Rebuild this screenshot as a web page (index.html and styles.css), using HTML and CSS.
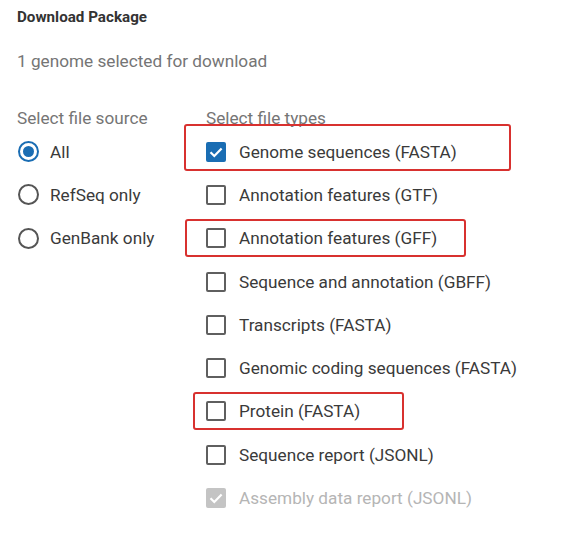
FILE: index.html
```html
<!DOCTYPE html>
<html>
<head>
<meta charset="utf-8">
<link rel="stylesheet" href="styles.css">
</head>
<body>
<div class="panel">
  <div class="title">Download Package</div>
  <div class="subtitle">1 genome selected for download</div>
  <div class="columns">
    <div class="col source">
      <div class="col-head">Select file source</div>
      <div class="row"><span class="radio checked"></span><span class="label">All</span></div>
      <div class="row"><span class="radio"></span><span class="label">RefSeq only</span></div>
      <div class="row"><span class="radio"></span><span class="label">GenBank only</span></div>
    </div>
    <div class="col types">
      <div class="col-head">Select file types</div>
      <div class="row"><span class="check checked"><svg viewBox="0 0 20 20"><path d="M4.5 10.2 L8.3 14 L15.6 6.6" fill="none" stroke="#fff" stroke-width="2.2"/></svg></span><span class="label">Genome sequences (FASTA)</span></div>
      <div class="row"><span class="check"></span><span class="label">Annotation features (GTF)</span></div>
      <div class="row"><span class="check"></span><span class="label">Annotation features (GFF)</span></div>
      <div class="row"><span class="check"></span><span class="label">Sequence and annotation (GBFF)</span></div>
      <div class="row"><span class="check"></span><span class="label">Transcripts (FASTA)</span></div>
      <div class="row"><span class="check"></span><span class="label">Genomic coding sequences (FASTA)</span></div>
      <div class="row"><span class="check"></span><span class="label">Protein (FASTA)</span></div>
      <div class="row"><span class="check"></span><span class="label">Sequence report (JSONL)</span></div>
      <div class="row disabled"><span class="check checked"><svg viewBox="0 0 20 20"><path d="M4.5 10.2 L8.3 14 L15.6 6.6" fill="none" stroke="#fff" stroke-width="2.2"/></svg></span><span class="label">Assembly data report (JSONL)</span></div>
      <div class="mark mark1"></div>
      <div class="mark mark2"></div>
      <div class="mark mark3"></div>
    </div>
  </div>
</div>
</body>
</html>
```

FILE: styles.css
```css
html, body {
  margin: 0;
  padding: 0;
  background: #fff;
}
body {
  font-family: Roboto, "Liberation Sans", sans-serif;
  color: #3a3a3a;
}
.panel {
  padding: 7px 17px 0 17px;
}
.title {
  font-size: 15.2px;
  line-height: 20px;
  font-weight: 700;
  color: #333;
}
.subtitle {
  margin-top: 22px;
  font-size: 17.2px;
  line-height: 24px;
  color: #757575;
}
.columns {
  margin-top: 33px;
  display: flex;
}
.col {
  display: flex;
  flex-direction: column;
}
.source {
  width: 189px;
}
.types {
  position: relative;
}
.col-head {
  font-size: 17.2px;
  line-height: 24px;
  color: #757575;
}
.row {
  height: 43.3px;
  display: flex;
  align-items: center;
  font-size: 17.2px;
  color: #3a3a3a;
}
.radio {
  box-sizing: border-box;
  width: 21px;
  height: 21px;
  border-radius: 50%;
  border: 2px solid #555;
  margin-left: 1px;
  margin-right: 11px;
  position: relative;
}
.radio.checked {
  border-color: #1a6db3;
}
.radio.checked::after {
  content: "";
  position: absolute;
  left: 3px;
  top: 3px;
  width: 11px;
  height: 11px;
  border-radius: 50%;
  background: #1a6db3;
}
.check {
  box-sizing: border-box;
  width: 20px;
  height: 20px;
  border: 2px solid #5f5f5f;
  border-radius: 2px;
  margin-right: 13px;
  display: flex;
}
.check.checked {
  background: #1a6db3;
  border-color: #1a6db3;
}
.check svg {
  width: 20px;
  height: 20px;
  margin: -2px;
}
.row.disabled {
  color: #b5b5b5;
}
.row.disabled .check {
  background: #c4c4c4;
  border-color: #c4c4c4;
}
.mark {
  position: absolute;
  border: 2px solid #d8312f;
  border-radius: 3px;
  box-sizing: border-box;
}
.mark1 {
  left: -22px;
  top: 17.5px;
  width: 327px;
  height: 47px;
}
.mark2 {
  left: -21px;
  top: 112.5px;
  width: 281px;
  height: 38px;
}
.mark3 {
  left: -13px;
  top: 285.5px;
  width: 211px;
  height: 38px;
}
```
